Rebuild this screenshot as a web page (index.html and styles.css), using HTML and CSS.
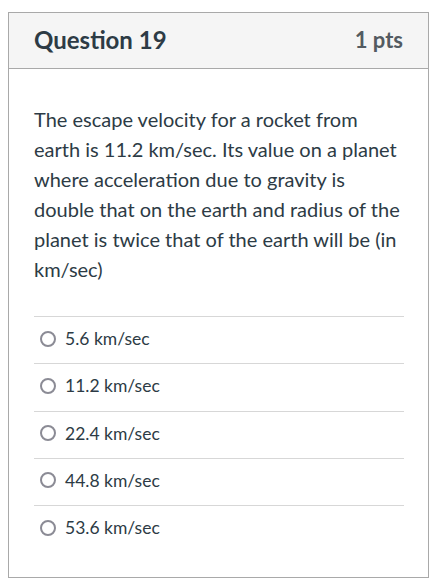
FILE: index.html
```html
<!DOCTYPE html>
<html>
<head>
<meta charset="utf-8">
<link rel="stylesheet" href="styles.css">
</head>
<body>
<div class="card">
  <div class="header">
    <span class="title">Question 19</span>
    <span class="pts">1 pts</span>
  </div>
  <div class="body">
    <p class="text">The escape velocity for a rocket from earth is 11.2 km/sec. Its value on a planet where acceleration due to gravity is double that on the earth and radius of the planet is twice that of the earth will be (in km/sec)</p>
    <div class="answers">
      <label class="answer"><span class="radio"></span><span>5.6 km/sec</span></label>
      <label class="answer"><span class="radio"></span><span>11.2 km/sec</span></label>
      <label class="answer"><span class="radio"></span><span>22.4 km/sec</span></label>
      <label class="answer"><span class="radio"></span><span>44.8 km/sec</span></label>
      <label class="answer"><span class="radio"></span><span>53.6 km/sec</span></label>
    </div>
  </div>
</div>
</body>
</html>
```
FILE: styles.css
```css
html, body {
  background: #ffffff;
}
body {
  margin: 12px 8px;
  font-family: Lato, "Liberation Sans", sans-serif;
  color: #2d3b45;
}
.card {
  width: 421px;
  box-sizing: border-box;
  border: 1px solid #a9a9a9;
}
.header {
  height: 56px;
  box-sizing: border-box;
  background: #f5f5f5;
  border-bottom: 1px solid #a9a9a9;
  display: flex;
  align-items: center;
  justify-content: space-between;
  padding: 0 25px 3px 25px;
  font-weight: bold;
}
.title {
  font-size: 24px;
  color: #2d3b45;
}
.pts {
  font-size: 22px;
  color: #535b61;
}
.body {
  padding: 35px 24px 25px 25px;
}
.text {
  margin: 0 0 32px 0;
  font-size: 20px;
  line-height: 30px;
}
.answers {
  display: flex;
  flex-direction: column;
}
.answer {
  display: flex;
  align-items: center;
  box-sizing: border-box;
  height: 47.25px;
  border-top: 1px solid #d7d7d7;
  font-size: 17.5px;
  padding: 0 0 3px 6px;
  gap: 9px;
}
.radio {
  width: 12px;
  height: 12px;
  border: 2px solid #8b8b95;
  border-radius: 50%;
  flex: none;
}
```
